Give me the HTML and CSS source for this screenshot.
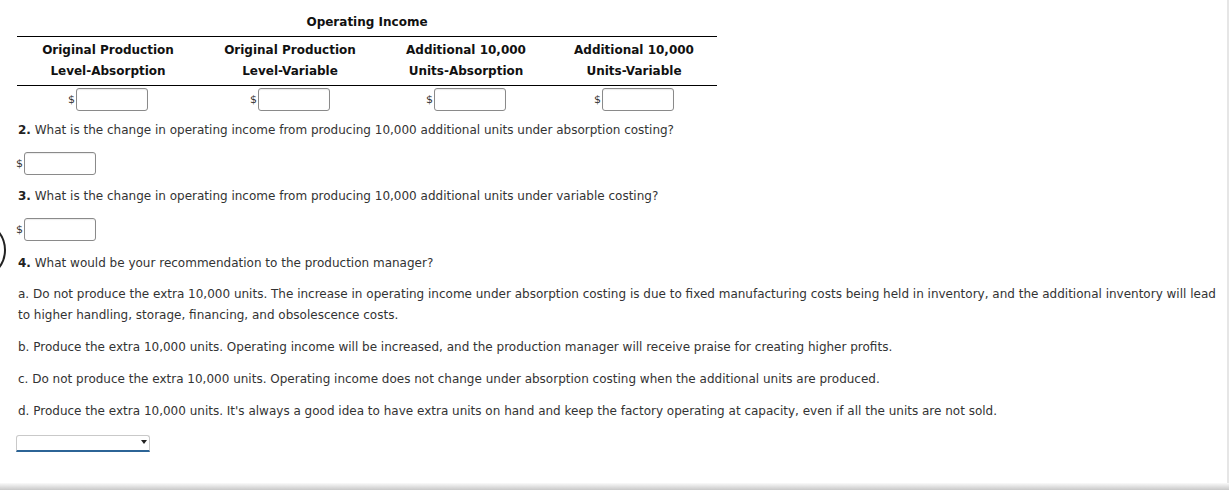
FILE: index.html
```html
<!DOCTYPE html>
<html>
<head>
<meta charset="utf-8">
<link rel="stylesheet" href="styles.css">
</head>
<body>
<div class="page">
  <div class="income">
    <div class="income-title">Operating Income</div>
    <div class="income-head">
      <div class="col c1">Original Production<br>Level-Absorption</div>
      <div class="col c2">Original Production<br>Level-Variable</div>
      <div class="col c3">Additional 10,000<br>Units-Absorption</div>
      <div class="col c4">Additional 10,000<br>Units-Variable</div>
    </div>
    <div class="income-row">
      <div class="col c1"><span class="cur">$</span><input class="num" type="text"></div>
      <div class="col c2"><span class="cur">$</span><input class="num" type="text"></div>
      <div class="col c3"><span class="cur">$</span><input class="num" type="text"></div>
      <div class="col c4"><span class="cur">$</span><input class="num" type="text"></div>
    </div>
  </div>

  <p class="q q2"><b>2.</b> What is the change in operating income from producing 10,000 additional units under absorption costing?</p>
  <div class="answer"><span class="cur">$</span><input class="num" type="text"></div>

  <p class="q"><b>3.</b> What is the change in operating income from producing 10,000 additional units under variable costing?</p>
  <div class="answer"><span class="cur">$</span><input class="num" type="text"></div>

  <p class="q q4"><b>4.</b> What would be your recommendation to the production manager?</p>
  <p class="opt">a. Do not produce the extra 10,000 units. The increase in operating income under absorption costing is due to fixed manufacturing costs being held in inventory, and the additional inventory will lead to higher handling, storage, financing, and obsolescence costs.</p>
  <p class="opt">b. Produce the extra 10,000 units. Operating income will be increased, and the production manager will receive praise for creating higher profits.</p>
  <p class="opt">c. Do not produce the extra 10,000 units. Operating income does not change under absorption costing when the additional units are produced.</p>
  <p class="opt">d. Produce the extra 10,000 units. It's always a good idea to have extra units on hand and keep the factory operating at capacity, even if all the units are not sold.</p>
  <div class="dropdown"><span class="caret"></span></div>
</div>
<div class="ring"></div>
<div class="edge-right"></div>
<div class="edge-bottom"></div>
</body>
</html>
```

FILE: styles.css
```css
html, body {
  margin: 0;
  padding: 0;
  background: #fff;
}
body {
  font-family: "DejaVu Sans", Verdana, sans-serif;
  font-size: 12px;
  color: #333;
  overflow: hidden;
}
.page {
  padding: 13px 10px 0 18px;
}
.income {
  width: 700px;
  margin-left: -1px;
}
.income-title {
  font-weight: bold;
  color: #111;
  text-align: center;
  line-height: 18px;
  padding-bottom: 5px;
  border-bottom: 1px solid #000;
}
.income-head, .income-row {
  display: flex;
}
.income-head {
  padding: 3px 0;
  line-height: 21px;
  font-weight: bold;
  color: #111;
  border-bottom: 1px solid #000;
}
.col {
  text-align: center;
}
.c1 { width: 182px; }
.c2 { width: 182px; }
.c3 { width: 170px; }
.c4 { width: 166px; }
.income-row {
  padding-top: 2px;
}
.income-row .col {
  display: flex;
  justify-content: center;
  align-items: center;
}
.cur {
  font-size: 11px;
  color: #333;
  margin-right: 1px;
}
.num {
  box-sizing: border-box;
  width: 72px;
  height: 23px;
  border: 1px solid #8a8a8a;
  border-radius: 3px;
  box-shadow: inset 0 1px 1px rgba(0,0,0,0.08);
  background: #fff;
  padding: 0;
  margin: 0;
  font: inherit;
}
.q {
  margin: 0;
  line-height: 21px;
}
.q2 {
  margin-top: 9px;
}
.q b {
  color: #222;
}
.answer {
  display: flex;
  align-items: center;
  margin: 11px 0 11px -2px;
}
.q4 {
  margin-top: 12px;
}
.opt {
  margin: 10px 0 0;
  line-height: 21px;
}
.opt + .opt {
  margin-top: 11px;
}
.dropdown {
  box-sizing: border-box;
  position: relative;
  width: 134px;
  height: 17px;
  margin: 13px 0 0 -2px;
  border: 1px solid #c9c9c9;
  border-bottom: 2px solid #2c6496;
  border-radius: 3px 3px 0 0;
  background: #fff;
}
.caret {
  position: absolute;
  right: 2px;
  top: 4px;
  width: 0;
  height: 0;
  border-left: 3px solid transparent;
  border-right: 3px solid transparent;
  border-top: 4px solid #222;
}
.ring {
  position: absolute;
  left: -54px;
  top: 220px;
  width: 56px;
  height: 56px;
  border: 2px solid #222;
  border-radius: 50%;
}
.edge-right {
  position: fixed;
  top: 0;
  right: 0;
  width: 2px;
  height: 100%;
  background: #e6e6e6;
}
.edge-bottom {
  position: fixed;
  left: 0;
  right: 0;
  bottom: 0;
  height: 7px;
  background: linear-gradient(#fafafa, #c8c8c8);
}
```
